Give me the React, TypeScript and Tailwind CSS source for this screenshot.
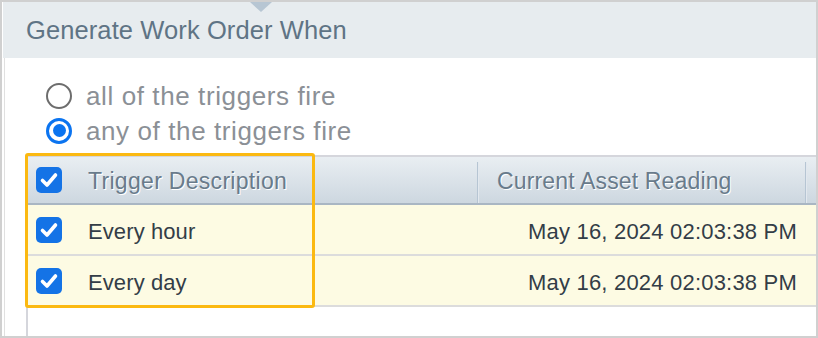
import React from 'react';

const FONT = { fontFamily: '"Liberation Sans", Arial, sans-serif' };

function Check() {
  return (
    <span className="w-[26px] h-[26px] rounded-[5px] bg-[#1473e6] flex items-center justify-center shrink-0">
      <svg width="26" height="26" viewBox="0 0 26 26">
        <polyline points="6.5,13.5 11,18 19.5,8" fill="none" stroke="#fff" strokeWidth="3.6" strokeLinecap="round" strokeLinejoin="round" />
      </svg>
    </span>
  );
}

function Radio({ checked }: { checked?: boolean }) {
  if (checked) {
    return (
      <span className="w-[26px] h-[26px] rounded-full border-[3px] border-[#0b74f0] bg-white flex items-center justify-center shrink-0">
        <span className="w-[13px] h-[13px] rounded-full bg-[#0b74f0]" />
      </span>
    );
  }
  return <span className="w-[26px] h-[26px] rounded-full border-2 border-[#6d6d6d] bg-white shrink-0" />;
}

const ROWS = [
  { desc: 'Every hour', reading: 'May 16, 2024 02:03:38 PM' },
  { desc: 'Every day', reading: 'May 16, 2024 02:03:38 PM' },
];

export default function App() {
  return (
    <div style={FONT} className="relative w-[818px] h-[338px] bg-white border-2 border-[#d0d0d0] flex flex-col overflow-hidden">
      {/* pointer from the step above */}
      <div className="absolute left-[248px] top-0 w-0 h-0 border-l-[11px] border-r-[11px] border-t-[10px] border-l-transparent border-r-transparent border-t-[#b7c6d3]" />

      {/* Section header */}
      <div className="h-[56px] shrink-0 bg-[#e7ecef] border-l border-white flex items-center pl-[23px]">
        <span className="mt-[2px] text-[25.5px] tracking-[0.1px] text-[#5f7485] leading-none">Generate Work Order When</span>
      </div>

      <div className="flex-1 ml-[2px] border-l border-[#e0e0e0] flex flex-col">
        {/* Radios */}
        <div className="pt-[21px] pb-[7px] pl-[41px] flex flex-col">
          <label className="h-[34px] flex items-center gap-[14px]">
            <Radio />
            <span className="text-[26px] tracking-[0.6px] text-[#8b9096] leading-none">all of the triggers fire</span>
          </label>
          <label className="h-[35px] flex items-center gap-[14px]">
            <Radio checked />
            <span className="text-[26px] tracking-[0.6px] text-[#8b9096] leading-none">any of the triggers fire</span>
          </label>
        </div>

        {/* Grid */}
        <div className="flex-1 ml-[21px] border-l-2 border-t-2 border-[#d5d6dc] flex flex-col">
          <div className="h-[48px] flex border-b-2 border-[#a9b6c3] bg-gradient-to-b from-[#e9eef2] to-[#cdd7e0]">
            <div className="w-[449px] flex items-center pl-[8px] gap-[26px]">
              <Check />
              <span className="mt-[3px] text-[23px] tracking-[0.3px] text-[#697b8b] [text-shadow:1px_1px_0_#fff]">Trigger Description</span>
            </div>
            <div className="w-[2px] mt-[5px] bg-[#b6c5d3] border-r border-[#e2e8ee]" />
            <div className="w-[326px] flex items-center pl-[18px]">
              <span className="mt-[3px] text-[23px] tracking-[0.15px] text-[#697b8b] [text-shadow:1px_1px_0_#fff]">Current Asset Reading</span>
            </div>
            <div className="w-[2px] mt-[5px] bg-[#b6c5d3] border-r border-[#e2e8ee]" />
            <div className="flex-1" />
          </div>
          {ROWS.map(r => (
            <div key={r.desc} className="h-[51px] flex bg-[#fdfbe3] border-b-2 border-[#dcdcdc]">
              <div className="w-[449px] flex items-center pl-[8px] gap-[26px]">
                <Check />
                <span className="mt-[3px] text-[22px] tracking-[0.1px] text-[#333d47]">{r.desc}</span>
              </div>
              <div className="w-[328px] flex items-center justify-end pr-[8px]">
                <span className="mt-[3px] text-[22px] tracking-[0.2px] text-[#333d47]">{r.reading}</span>
              </div>
              <div className="flex-1" />
            </div>
          ))}
        </div>
      </div>

      {/* highlight */}
      <div className="absolute left-[23px] top-[151px] w-[290px] h-[155px] border-[3px] border-[#fbb911] rounded-[3px] pointer-events-none" />
    </div>
  );
}
